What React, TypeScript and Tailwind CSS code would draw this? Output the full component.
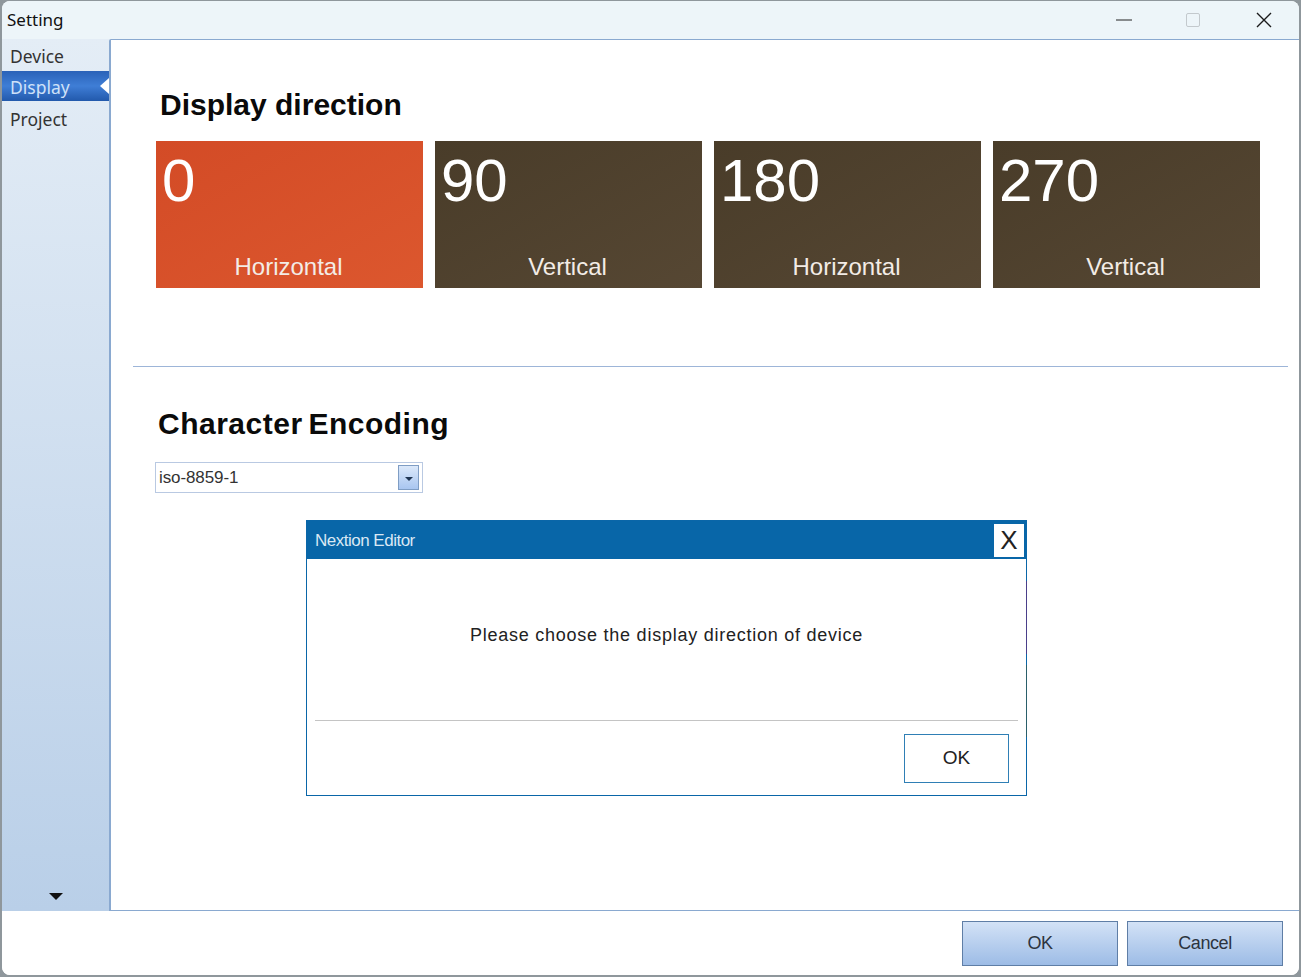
import React from 'react';

const arial = "font-['Liberation_Sans',Arial,sans-serif]";
const ui = "font-['Noto_Sans',sans-serif]";

const directions = [
  { deg: '0', label: 'Horizontal', active: true },
  { deg: '90', label: 'Vertical', active: false },
  { deg: '180', label: 'Horizontal', active: false },
  { deg: '270', label: 'Vertical', active: false },
];

function DirectionCard({ deg, label, active }: { deg: string; label: string; active: boolean }) {
  return (
    <div
      className={`w-[267px] h-[147px] flex flex-col justify-between pl-[6px] text-white ${
        active ? 'bg-gradient-to-br from-[#d34b26] to-[#dc572e]' : 'bg-gradient-to-br from-[#493c29] to-[#564733]'
      }`}
    >
      <div className="text-[60px] leading-[60px] mt-[10px] font-light">{deg}</div>
      <div className="text-2xl leading-[28px] text-center text-[#f3ece6] mb-[7px] pr-[8px]">{label}</div>
    </div>
  );
}

function FooterButton({ children }: { children: React.ReactNode }) {
  return (
    <button className="w-[156px] h-[45px] border border-[#5f7ea6] bg-gradient-to-b from-[#d3e2f6] to-[#9dbce6] text-[18px] tracking-[-0.4px] text-[#2c3440]">
      {children}
    </button>
  );
}

export default function App() {
  return (
    <div className={`relative w-[1301px] h-[977px] bg-[#8f979c] overflow-hidden ${arial}`}>
      <div className="absolute inset-x-[2px] top-[1px] bottom-[2px] flex flex-col rounded-lg overflow-hidden bg-white">
        {/* Title bar */}
        <div className="h-[38px] shrink-0 flex items-center justify-between bg-[#edf5f9] pl-[5px]">
          <span className={`text-[17px] text-[#111] ${ui}`}>Setting</span>
          <div className="flex items-center">
            <div className="w-[70px] h-[38px] flex items-center justify-center">
              <svg width="16" height="2" viewBox="0 0 16 2"><path d="M0 1h16" stroke="#222" strokeWidth="1" /></svg>
            </div>
            <div className="w-[70px] h-[38px] flex items-center justify-center pr-[2px]">
              <div className="w-[14px] h-[14px] border border-[#c3c9cd] rounded-[2px]" />
            </div>
            <div className="w-[70px] h-[38px] flex items-center justify-center">
              <svg width="16" height="16" viewBox="0 0 16 16"><path d="M1 1l14 14M15 1L1 15" stroke="#1a1a1a" strokeWidth="1.4" /></svg>
            </div>
          </div>
        </div>

        {/* Main row */}
        <div className="flex flex-1 min-h-0 bg-[#edf5f9]">
          <aside className={`w-[107px] shrink-0 flex flex-col pt-[1px] bg-gradient-to-b from-[#e4edf6] to-[#b9cfe8] ${ui}`}>
            <div className="h-[31px] flex items-center pl-[8px] pt-[2px] text-[17.5px] text-[#333]">Device</div>
            <div className="relative h-[30px] flex items-center pl-[8px] pt-[2px] text-[17.5px] text-[#cfe1f8] bg-gradient-to-b from-[#2a62b8] via-[#3f7ed6] to-[#2259ac]">
              Display
              <div className="absolute right-0 top-[7px] w-0 h-0 border-y-[8px] border-y-transparent border-r-[9px] border-r-white" />
            </div>
            <div className="h-[32px] flex items-center pl-[8px] pt-[5px] text-[17.5px] text-[#333]">Project</div>
            <div className="mt-auto h-[30px] flex items-center justify-center">
              <div className="w-0 h-0 border-x-[7px] border-x-transparent border-t-[7px] border-t-[#111]" />
            </div>
          </aside>

          <main className="flex-1 bg-white border-l-2 border-y border-[#8aa9d0] rounded-tl-[2px] pt-[47px] pr-[11px] pl-[22px]">
            <h2 className="text-[30px] leading-[36px] font-bold text-[#0a0a0a] pl-[27px]">Display direction</h2>
            <div className="flex gap-[12px] mt-[18px] pl-[23px]">
              {directions.map((d) => (
                <DirectionCard key={d.deg} {...d} />
              ))}
            </div>
            <div className="mt-[78px] border-t border-[#9db5d8]" />
            <h2 className="mt-[39px] text-[30px] leading-[36px] font-bold text-[#0a0a0a] pl-[25px] tracking-[0.5px] [word-spacing:-3px]">
              Character Encoding
            </h2>
            <div className="ml-[22px] mt-[20px] w-[268px] h-[31px] border border-[#b9c9e2] flex items-center justify-between pl-[3px] pr-[3px] text-[#333] text-[17px]">
              <span className="tracking-[-0.1px]">iso-8859-1</span>
              <div className="w-[21px] h-[25px] border border-[#7f9dc4] bg-gradient-to-b from-[#dbe8fa] to-[#a9c6f0] flex items-center justify-center">
                <div className="w-0 h-0 mt-[3px] border-x-[4px] border-x-transparent border-t-[4px] border-t-[#1f3552]" />
              </div>
            </div>
          </main>
        </div>

        {/* Footer */}
        <div className="h-[64px] shrink-0 flex items-start justify-end gap-[9px] pt-[10px] pr-[16px] bg-white">
          <FooterButton>OK</FooterButton>
          <FooterButton>Cancel</FooterButton>
        </div>
      </div>

      {/* Message dialog */}
      <div className="absolute left-[306px] top-[520px] w-[721px] h-[276px] flex flex-col bg-white border border-[#0a66a8]">
        <div className="h-[38px] shrink-0 flex items-center justify-between bg-[#0866a8] pl-[8px] pr-[2px] pt-[1px]">
          <span className="text-[17px] text-[#d9e8f4] tracking-[-0.5px]">Nextion Editor</span>
          <div className="w-[30px] h-[33px] bg-white flex items-center justify-center text-[26px] text-[#222]">X</div>
        </div>
        <div className="h-[161px] shrink-0 flex items-center justify-center pb-[8px] text-[18px] tracking-[0.75px] text-[#222]">
          Please choose the display direction of device
        </div>
        <div className="mx-[8px] border-t border-[#c4c4c4]" />
        <div className="flex justify-end pt-[13px] pr-[17px]">
          <button className="w-[105px] h-[49px] border-[1.5px] border-[#2f7fb5] text-[19px] text-[#222] bg-white">OK</button>
        </div>
        {/* bits of the window behind showing at the dialog edge */}
        <div className="absolute right-[-1px] top-[60px] w-[1px] h-[73px] bg-[#4a3f8a]" />
        <div className="absolute right-[-1px] top-[144px] w-[1px] h-[72px] bg-[#2a5f6a]" />
      </div>
    </div>
  );
}
